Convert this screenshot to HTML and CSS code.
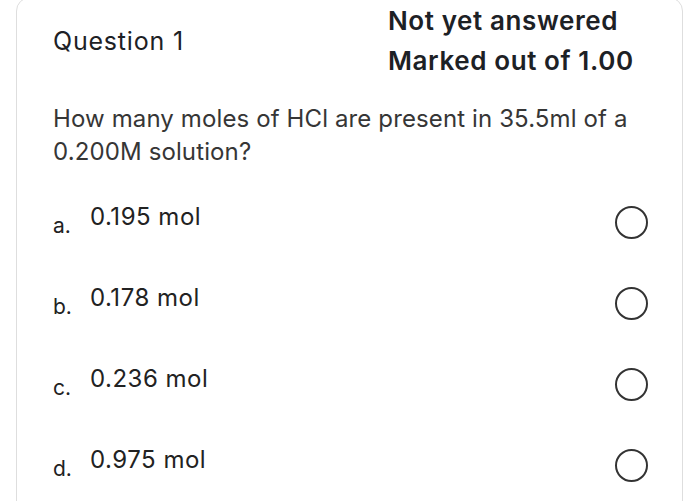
FILE: index.html
```html
<!DOCTYPE html>
<html>
<head>
<meta charset="utf-8">
<link rel="stylesheet" href="styles.css">
</head>
<body>
<div class="card">
  <div class="header">
    <div class="qno">Question 1</div>
    <div class="status">
      <div>Not yet answered</div>
      <div>Marked out of 1.00</div>
    </div>
  </div>
  <div class="qtext">How many moles of HCl are present in 35.5ml of a 0.200M solution?</div>
  <div class="answers">
    <div class="opt"><span class="letter">a.</span><span class="val">0.195 mol</span><span class="radio"></span></div>
    <div class="opt"><span class="letter">b.</span><span class="val">0.178 mol</span><span class="radio"></span></div>
    <div class="opt"><span class="letter">c.</span><span class="val">0.236 mol</span><span class="radio"></span></div>
    <div class="opt"><span class="letter">d.</span><span class="val">0.975 mol</span><span class="radio"></span></div>
  </div>
</div>
</body>
</html>
```

FILE: styles.css
```css
html, body {
  margin: 0;
  padding: 0;
  background: #ffffff;
  overflow: hidden;
}
body {
  font-family: Inter, "Noto Sans", sans-serif;
  color: #1d2125;
}
.card {
  margin: -3px 0 0 16px;
  width: 667px;
  height: 520px;
  border: 1.5px solid #dedede;
  border-radius: 14px;
  box-sizing: border-box;
  padding: 3px 0 0 36px;
}
.header {
  display: flex;
  align-items: center;
}
.qno {
  font-size: 25px;
  width: 335px;
  letter-spacing: 0.8px;
}
.status {
  font-size: 26px;
  font-weight: 600;
  line-height: 40px;
  letter-spacing: 0.6px;
}
.qtext {
  margin-top: 21px;
  font-size: 24px;
  line-height: 33px;
  color: #363636;
  width: 600px;
  letter-spacing: 0.12px;
}
.answers {
  margin-top: 38px;
}
.opt {
  display: flex;
  align-items: flex-start;
  height: 81px;
  color: #222;
}
.letter {
  width: 37px;
  font-size: 21px;
  padding-top: 7px;
}
.val {
  flex: 1;
  font-size: 24px;
  line-height: 30px;
  letter-spacing: 0.5px;
  margin-top: -4px;
}
.radio {
  width: 33px;
  height: 33px;
  border: 2px solid #333;
  border-radius: 50%;
  box-sizing: border-box;
  margin-right: 34px;
}
```
